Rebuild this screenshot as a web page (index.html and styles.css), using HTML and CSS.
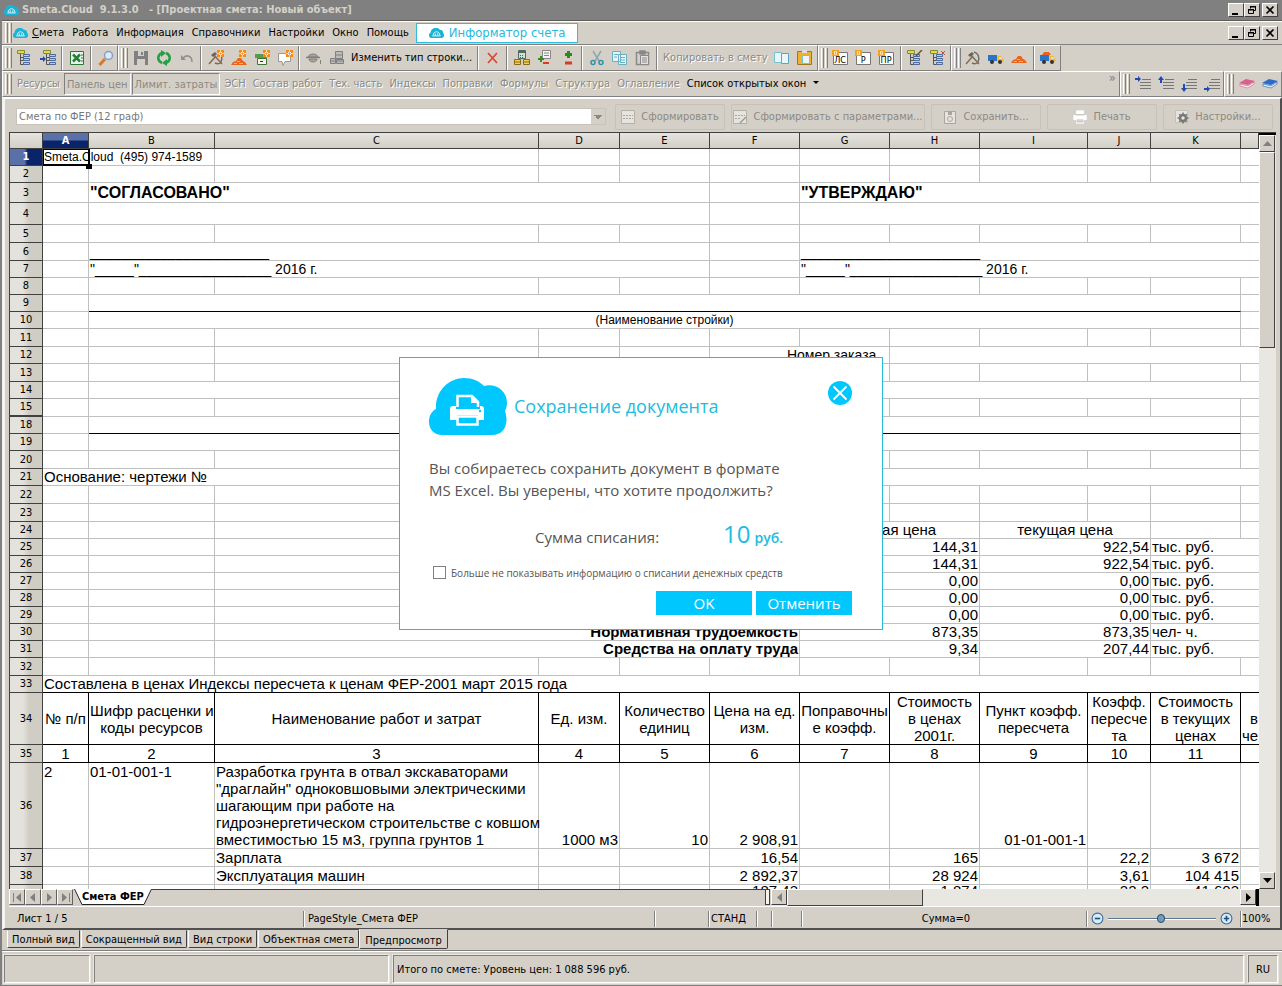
FILE: index.html
```html
<!DOCTYPE html>
<html lang="ru">
<head>
    <meta charset="UTF-8">
    <meta name="viewport" content="width=device-width, initial-scale=1.0">
    <title>Smeta.Cloud 9.1.3.0</title>
    <link rel="stylesheet" href="styles.css">
</head>
<body>
    <!-- shared icon parts -->
    <svg class="defs" aria-hidden="true">
        <symbol id="logo" viewBox="0 0 18 14">
            <path fill="#18b4d8" d="M3 13C1 13 0 11.500 0 10c0-2 1-3 2-3.500C2 3 5 1 8 1c2 0 4 .5 5 2 3 0 4 2 4 4 1 1 1 2 1 3 0 2-1 3-3 3z"/>
            <path fill="none" stroke="#fff" d="M4 10.500h10M5 10c0-6 8-6 8 0M7.500 10V7.500M10.500 10V7.500"/>
        </symbol>
        <symbol id="tree" viewBox="0 0 16 16">
            <path fill="#dcdc50" stroke="#8a8a28" d="M.5.500h7v3h-7z"/>
            <path fill="none" stroke="#555" d="M3.500 4v10.500H7M3.500 7.500H7M3.500 10.500H7"/>
            <path fill="#b4ccf0" stroke="#4c6a9c" d="M6.500 4.500h6v2h-6zM6.500 8.500h6v2h-6zM6.500 12.500h6v2h-6z"/>
        </symbol>
        <symbol id="new" viewBox="0 0 16 16">
            <path fill="#f58a1f" d="M9 0h7v7H9z"/>
            <path fill="#fff" d="M11 2h3v3h-3z"/>
            <path stroke="#ffd9a8" d="M12.500 0v7M9 3.500h7"/>
            <circle cx="12.500" cy="3.500" r="1" fill="#f58a1f"/>
        </symbol>
        <symbol id="newleft" viewBox="0 0 16 16">
            <path fill="#fff" stroke="#777" d="M1.500 2.500h14v12h-14z"/>
            <path fill="#f5a01f" d="M0 0h7v6H0z"/>
            <path fill="#fff" d="M2 1.500h3v3H2z"/>
            <circle cx="3.500" cy="3" r="1" fill="#f5a01f"/>
        </symbol>
        <symbol id="pile" viewBox="0 0 16 16">
            <path fill="#e8661c" d="M0 13l2-3 3-1 2-3h3l2 3 2 1 2 3z"/>
            <path stroke="#fbb070" d="M3 11.500h3M8 11.500h4M6 9.500h3"/>
        </symbol>
        <symbol id="truck" viewBox="0 0 16 16">
            <path fill="#2a74c8" d="M0 5h9v6H0z"/>
            <path fill="#f2b632" d="M9.500 6h3.500l2.500 3v3H9.500z"/>
            <path fill="#cfe6f8" d="M11 7h2l1.500 2H11z"/>
            <circle cx="4" cy="12" r="2" fill="#333"/><circle cx="12" cy="12" r="2" fill="#333"/>
        </symbol>
        <symbol id="lines" viewBox="0 0 16 16">
            <path stroke="#777" d="M7 3.500h9M5 6.500h11M5 9.500h11M5 12.500h11"/>
        </symbol>
        <symbol id="pick" viewBox="0 0 16 16">
            <path fill="none" stroke="#6d6d6d" stroke-width="1.500" d="M9 2c4 1 6 5 4 10-1 2-4 2-6 1"/>
            <path fill="none" stroke="#8a6a4d" stroke-width="1.500" d="M1 14l7-8M5 4l9 10"/>
            <path fill="#666" d="M3 5l4-3 2 2-4 3z"/>
        </symbol>
        <symbol id="books" viewBox="0 0 16 16">
            <path fill="currentColor" d="M0 7l7-4 9 2-7 4z"/>
            <path fill="#fff" stroke="currentColor" stroke-width=".7" d="M1 8l8 2 6-4v2l-6 4-8-2z"/>
        </symbol>
    </svg>

    <header class="titlebar">
        <svg class="logo"><use href="#logo"/></svg>
        <h1>Smeta.Cloud&nbsp; 9.1.3.0 &nbsp; - [Проектная смета: Новый объект]</h1>
        <div class="window-buttons">
            <button type="button" aria-label="Свернуть"><svg viewBox="0 0 12 11"><path d="M2 8h6v2H2z"/></svg></button>
            <button type="button" aria-label="Восстановить"><svg viewBox="0 0 12 11"><path fill="none" stroke="#000" d="M4.500 3.500V1.500h5v4h-2M2.500 4.500h5v4h-5z"/><path d="M4 1h6v1.500H4zM2 4h6v1.500H2z"/></svg></button>
            <button type="button" class="close" aria-label="Закрыть"><svg viewBox="0 0 12 11"><path stroke="#000" stroke-width="1.700" d="M2.500 1.500l7 7M9.500 1.500l-7 7"/></svg></button>
        </div>
    </header>

    <nav class="menubar">
        <span class="grip"></span>
        <svg class="logo"><use href="#logo"/></svg>
        <button type="button"><u>С</u>мета</button>
        <button type="button">Работа</button>
        <button type="button">Информация</button>
        <button type="button">Справочники</button>
        <button type="button">Настройки</button>
        <button type="button">Окно</button>
        <button type="button">Помощь</button>
        <button type="button" class="informer"><svg class="logo"><use href="#logo"/></svg>Информатор счета</button>
        <div class="window-buttons">
            <button type="button" aria-label="Свернуть"><svg viewBox="0 0 12 11"><path d="M2 8h6v2H2z"/></svg></button>
            <button type="button" aria-label="Восстановить"><svg viewBox="0 0 12 11"><path fill="none" stroke="#000" d="M4.500 3.500V1.500h5v4h-2M2.500 4.500h5v4h-5z"/><path d="M4 1h6v1.500H4zM2 4h6v1.500H2z"/></svg></button>
            <button type="button" class="close" aria-label="Закрыть"><svg viewBox="0 0 12 11"><path stroke="#000" stroke-width="1.700" d="M2.500 1.500l7 7M9.500 1.500l-7 7"/></svg></button>
        </div>
    </nav>

    <div class="toolbars">
        <div class="toolbar">
            <span class="grip"></span>
            <button type="button" class="tool" aria-label="Дерево"><svg><use href="#tree"/></svg></button>
            <button type="button" class="tool" aria-label="Вставить в дерево"><svg viewBox="0 0 16 16"><use href="#tree" x="3"/><path fill="#1f49b6" d="M0 8h3V6l3 3-3 3v-2H0z"/></svg></button>
            <span class="sep"></span>
            <button type="button" class="tool" aria-label="Excel"><svg viewBox="0 0 16 16"><path fill="#e9f3e9" stroke="#2b7a3a" d="M1.500 1.500h13v13h-13z"/><path stroke="#23813a" stroke-width="2.500" d="M4 4.500l7 7M11 4.500l-7 7"/><path stroke="#2b7a3a" d="M12 5h2M12 8h2M12 11h2"/></svg></button>
            <span class="sep"></span>
            <button type="button" class="tool" aria-label="Поиск"><svg viewBox="0 0 16 16"><circle cx="10.500" cy="5.500" r="4" fill="#d6ebfb" stroke="#8c9cc0" stroke-width="1.500"/><path stroke="#d9772b" stroke-width="3" d="M7 9l-5.500 6"/></svg></button>
        </div>
        <div class="toolbar">
            <span class="grip"></span>
            <button type="button" class="tool" aria-label="Сохранить"><svg viewBox="0 0 16 16"><path fill="#808080" d="M1 1h14v14H1z"/><path fill="#d4d0c8" d="M5 1h6v5H5zM4 9h8v6H4z"/><path fill="#808080" d="M8 2h2v3H8z"/></svg></button>
            <button type="button" class="tool" aria-label="Обновить"><svg viewBox="0 0 16 16"><path fill="none" stroke="#25a046" stroke-width="2.500" d="M6 13C1 11 1 5 6 3M10 3c5 2 5 8 0 10"/><path fill="#25a046" d="M5 0l5 3-5 4zM11 16l-5-3 5-4z"/></svg></button>
            <button type="button" class="tool" aria-label="Отменить"><svg viewBox="0 0 16 16"><path fill="none" stroke="#909090" stroke-width="1.500" d="M4 8c4-4 9-2 9 4"/><path fill="#909090" d="M2 5v5h5z"/></svg></button>
            <span class="sep"></span>
            <button type="button" class="tool" aria-label="Новая работа"><svg viewBox="0 0 16 16"><use href="#pick"/><use href="#new"/></svg></button>
            <button type="button" class="tool" aria-label="Новый материал"><svg viewBox="0 0 16 16"><use href="#pile" y="2"/><use href="#new" x="-1"/></svg></button>
            <button type="button" class="tool" aria-label="Новый раздел"><svg viewBox="0 0 16 16"><path fill="#5a9a50" d="M1 4h12v4H1z"/><path fill="#f4f4ea" stroke="#3f7438" d="M3.500 8.500h9v6h-9z"/><path stroke="#333" d="M6 11.500h3"/><use href="#new"/></svg></button>
            <button type="button" class="tool" aria-label="Новый комментарий"><svg viewBox="0 0 16 16"><path fill="#fff" stroke="#999" d="M1.500 3.500h12v8H8l-2 4-1-4H1.500z"/><use href="#new"/></svg></button>
            <span class="sep"></span>
            <button type="button" class="tool" aria-label="Каска"><svg viewBox="0 0 16 16"><path fill="#a8a59e" stroke="#808080" d="M2 7c1-4 9-4 10 0zM3 9h8c0 4-8 4-8 0z"/><path stroke="#808080" stroke-width="1.500" d="M0 7.500h14"/><path fill="#808080" d="M14 10h1v4h-1z"/></svg></button>
            <button type="button" class="tool" aria-label="Машины"><svg viewBox="0 0 16 16"><path fill="#bbb" stroke="#808080" d="M6.500 1.500h7v7h-7zM1.500 8.500h5v5h-5zM7.500 9.500h7v4h-7z"/><path stroke="#808080" d="M6 5h8M1 11h14"/></svg></button>
            <button type="button" class="tool-text row-type">Изменить тип строки...</button>
            <span class="sep"></span>
            <button type="button" class="tool" aria-label="Удалить"><svg viewBox="0 0 16 16"><path stroke="#e0442e" stroke-width="1.700" d="M3 3l9 10M12 3L3 13"/></svg></button>
            <span class="sep"></span>
            <button type="button" class="tool" aria-label="Расчёт"><svg viewBox="0 0 16 16"><path fill="#cfe0d8" stroke="#4f6a60" d="M4.500.5h7v8h-7z"/><path fill="#4f6a60" d="M5 1h6v2H5zM6 5h1v1H6zM8 5h1v1H8zM6 7h1v1H6zM8 7h1v1H8z"/><path fill="#f6cf4a" stroke="#8a6a1a" d="M.5 9.500h6v5h-6zM9.500 9.500h6v5h-6z"/><path stroke="#8a6a1a" d="M0 12h7M9 12h7"/></svg></button>
            <button type="button" class="tool" aria-label="Поправка"><svg viewBox="0 0 16 16"><path fill="#f4f4f4" stroke="#888" d="M5.500.5h8v8h-8z"/><path stroke="#888" d="M7 3h5M7 5.500h5"/><path stroke="#3a8a22" stroke-width="2" d="M1 9h6M4 6v6"/><path stroke="#d83a22" stroke-width="2" d="M6 13h6"/></svg></button>
            <button type="button" class="tool" aria-label="Плюс минус"><svg viewBox="0 0 16 16"><path stroke="#2f8a1c" stroke-width="3" d="M5 4.500h7M8.500 1v7"/><path stroke="#d83a22" stroke-width="3" d="M5 13h7"/></svg></button>
            <span class="sep"></span>
            <button type="button" class="tool" aria-label="Вырезать"><svg viewBox="0 0 16 16"><path stroke="#8aa8b0" stroke-width="1.500" d="M4 1l6 10M12 1L6 11"/><circle cx="4" cy="12.500" r="2" fill="none" stroke="#2f93a8" stroke-width="1.500"/><circle cx="12" cy="12.500" r="2" fill="none" stroke="#2f93a8" stroke-width="1.500"/></svg></button>
            <button type="button" class="tool" aria-label="Копировать"><svg viewBox="0 0 16 16"><path fill="#e4f4f8" stroke="#6ab0c4" d="M.5 1.500h8v10h-8zM6.500 4.500h8v10h-8z"/><path stroke="#6ab0c4" d="M2 4.500h4M2 7h3M8 7.500h5M8 10h5M8 12.500h5"/></svg></button>
            <button type="button" class="tool" aria-label="Вставить"><svg viewBox="0 0 16 16"><path fill="none" stroke="#888" stroke-width="1.500" d="M1.500 2.500h12v12h-12zM5 1h5v3H5z"/><path fill="#e4e2dc" stroke="#888" d="M5.500 5.500h8v9h-8z"/><path stroke="#888" d="M7 8h5M7 10h5M7 12h5"/></svg></button>
            <span class="sep"></span>
            <button type="button" class="tool-text copy-to" disabled>Копировать в смету</button>
            <button type="button" class="tool" aria-label="Копировать строки"><svg viewBox="0 0 16 16"><path fill="#eaf7fa" stroke="#7ac0d0" d="M.5 2.500h7v10h-7z"/><path fill="#eaf7fa" stroke="#5aa8bc" d="M7.500 3.500h7v10h-7z"/></svg></button>
            <button type="button" class="tool" aria-label="Вставить строки"><svg viewBox="0 0 16 16"><path fill="#f0b030" stroke="#a8761a" d="M.5 1.500h14v13H.5z"/><path fill="#ddd" d="M5 0h5v3H5z"/><path fill="#eaf7fa" stroke="#7ac0d0" d="M5.500 5.500h7v8h-7z"/></svg></button>
        </div>
        <div class="toolbar">
            <span class="grip"></span>
            <button type="button" class="tool badge"><svg><use href="#newleft"/></svg><span>ЛС</span></button>
            <button type="button" class="tool badge"><svg><use href="#newleft"/></svg><span>Р</span></button>
            <button type="button" class="tool badge"><svg><use href="#newleft"/></svg><span>ПР</span></button>
            <span class="sep"></span>
            <button type="button" class="tool" aria-label="Править дерево"><svg viewBox="0 0 16 16"><use href="#tree"/><path stroke="#6b5020" stroke-width="1.500" d="M9 6l6-6"/></svg></button>
            <button type="button" class="tool" aria-label="Удалить из дерева"><svg viewBox="0 0 16 16"><use href="#tree"/><path stroke="#e0442e" d="M11 1l4 4M15 1l-4 4"/></svg></button>
        </div>
        <div class="toolbar">
            <span class="grip"></span>
            <button type="button" class="tool" aria-label="Работы"><svg><use href="#pick"/></svg></button>
            <button type="button" class="tool" aria-label="Машины"><svg><use href="#truck"/></svg></button>
            <button type="button" class="tool" aria-label="Материалы"><svg><use href="#pile"/></svg></button>
            <span class="sep"></span>
            <button type="button" class="tool" aria-label="Перевозка"><svg viewBox="0 0 16 16"><path fill="#e8661c" d="M2 5l2-3h5l2 3z"/><use href="#truck"/></svg></button>
        </div>
    </div>

    <div class="toolbars">
        <div class="toolbar panels">
            <span class="grip"></span>
            <button type="button" disabled>Ресурсы</button>
            <button type="button" class="pressed" disabled>Панель цен</button>
            <button type="button" class="pressed" disabled>Лимит. затраты</button>
            <button type="button" disabled>ЭСН</button>
            <button type="button" disabled>Состав работ</button>
            <button type="button" disabled>Тех. часть</button>
            <button type="button" disabled>Индексы</button>
            <button type="button" disabled>Поправки</button>
            <button type="button" disabled>Формулы</button>
            <button type="button" disabled>Структура</button>
            <button type="button" disabled>Оглавление</button>
            <button type="button">Список открытых окон <i class="caret"></i></button>
            <span class="more">»</span>
        </div>
        <div class="toolbar">
            <span class="grip"></span>
            <button type="button" class="tool" aria-label="Вправо"><svg viewBox="0 0 16 16"><use href="#lines"/><path fill="#1f49b6" d="M0 2h3V0l3 3-3 3V4H0z"/></svg></button>
            <button type="button" class="tool" aria-label="Вверх"><svg viewBox="0 0 16 16"><use href="#lines"/><path fill="#1f49b6" d="M2 7V4H0l3-4 3 4H4v3z"/></svg></button>
            <button type="button" class="tool" aria-label="Вниз"><svg viewBox="0 0 16 16"><use href="#lines"/><path fill="#1f49b6" d="M2 8v4H0l3 4 3-4H4V8z"/></svg></button>
            <button type="button" class="tool" aria-label="Влево"><svg viewBox="0 0 16 16"><use href="#lines"/><path fill="#1f49b6" d="M0 12h3v-2l3 3-3 3v-2H0z"/></svg></button>
        </div>
        <div class="toolbar">
            <span class="grip"></span>
            <button type="button" class="tool pink" aria-label="Сборник"><svg><use href="#books"/></svg></button>
            <button type="button" class="tool blue" aria-label="Справочник"><svg><use href="#books"/></svg></button>
        </div>
    </div>

    <main class="child">
        <form class="report-bar">
            <select aria-label="Форма отчёта" disabled>
                <option>Смета по ФЕР (12 граф)</option>
            </select>
            <button type="button" disabled><svg viewBox="0 0 14 14"><path fill="#e6e4de" stroke="#b4b0a6" d="M.5.5h13v13H.5z"/><path stroke="#aaa69c" stroke-dasharray="2 1" d="M2 5.500h10M2 8.500h10"/></svg>Сформировать</button>
            <button type="button" class="wide" disabled><svg viewBox="0 0 14 14"><path fill="#e6e4de" stroke="#b4b0a6" d="M.5.5h13v13H.5z"/><path stroke="#aaa69c" stroke-dasharray="2 1" d="M2 5.500h10M2 8.500h6"/><path stroke="#999" stroke-width="1.500" d="M7 13l6-6"/></svg>Сформировать с параметрами...</button>
            <button type="button" disabled><svg viewBox="0 0 14 14"><path fill="#e6e4de" stroke="#aaa69c" d="M1.500 1.500h11v12h-11z"/><path fill="#aaa69c" d="M5 1h4v4H5z"/><circle cx="7" cy="9" r="2.500" fill="none" stroke="#aaa69c"/></svg>Сохранить...</button>
            <button type="button" disabled><svg viewBox="0 0 16 16"><path fill="#fff" stroke="#bbb" stroke-width=".6" d="M3 0h10v5h3v7h-3v4H3v-4H0V5h3z"/><path stroke="#aaa69c" d="M3 5.500h10M4 11.500h8M4 13.500h8"/></svg>Печать</button>
            <button type="button" disabled><svg viewBox="0 0 14 14"><path fill="#e6e4de" stroke="#c4c0b6" d="M.5.5h12v12H.5z"/><circle cx="8" cy="8" r="3" fill="none" stroke="#777" stroke-width="2.500"/><path stroke="#777" stroke-width="1.500" d="M8 2.500v2M8 11.500v2M2.500 8h2M11.500 8h2M4.200 4.200l1.300 1.300M10.500 10.500l1.300 1.300M4.200 11.800l1.300-1.300M10.500 5.500l1.300-1.300"/></svg>Настройки...</button>
        </form>

        <div class="sheet-frame">
            <div class="sheet">
                <table>
                    <colgroup>
                        <col class="w-head"><col class="w-a"><col class="w-b"><col class="w-c"><col class="w-d">
                        <col class="w-e"><col class="w-e"><col class="w-e"><col class="w-e">
                        <col class="w-i"><col class="w-j"><col class="w-e"><col>
                    </colgroup>
                    <thead>
                        <tr><th></th><th class="current">A</th><th>B</th><th>C</th><th>D</th><th>E</th><th>F</th><th>G</th><th>H</th><th>I</th><th>J</th><th>K</th><th></th></tr>
                    </thead>
                    <tbody>
                        <tr><th class="current">1</th><td class="small selected">Smeta.Cloud&nbsp; (495) 974-1589</td><td></td><td></td><td></td><td></td><td></td><td></td><td></td><td></td><td></td><td></td><td></td></tr>
                        <tr><th>2</th><td></td><td></td><td></td><td></td><td></td><td></td><td></td><td></td><td></td><td></td><td></td><td></td></tr>
                        <tr class="h20"><th>3</th><td></td><td class="approve" colspan="4">"СОГЛАСОВАНО"</td><td></td><td class="approve" colspan="6">"УТВЕРЖДАЮ"</td></tr>
                        <tr class="h22"><th>4</th><td></td><td colspan="4"></td><td></td><td colspan="6"></td></tr>
                        <tr class="h18"><th>5</th><td></td><td></td><td></td><td></td><td></td><td></td><td></td><td></td><td></td><td></td><td></td><td></td></tr>
                        <tr class="h18"><th>6</th><td></td><td class="sign" colspan="4">_______________________</td><td></td><td class="sign" colspan="6">_______________________</td></tr>
                        <tr><th>7</th><td></td><td class="sign" colspan="4">"_____"_________________ 2016 г.</td><td></td><td class="sign" colspan="6">"_____"_________________ 2016 г.</td></tr>
                        <tr><th>8</th><td></td><td></td><td></td><td></td><td></td><td></td><td></td><td></td><td></td><td></td><td></td><td></td></tr>
                        <tr><th>9</th><td></td><td class="rule" colspan="10"></td><td></td></tr>
                        <tr><th>10</th><td></td><td class="small center" colspan="10">(Наименование стройки)</td><td></td></tr>
                        <tr class="h18"><th>11</th><td></td><td></td><td></td><td></td><td></td><td></td><td></td><td></td><td></td><td></td><td></td><td></td></tr>
                        <tr><th>12</th><td></td><td></td><td></td><td></td><td></td><td class="sign right" colspan="2">Номер заказа &nbsp;&nbsp;</td><td colspan="5"></td></tr>
                        <tr class="h18"><th>13</th><td></td><td></td><td></td><td></td><td></td><td></td><td></td><td></td><td></td><td></td><td></td><td></td></tr>
                        <tr><th>14</th><td></td><td colspan="11"></td></tr>
                        <tr class="h18 hidden-below"><th>15</th><td></td><td></td><td></td><td></td><td></td><td></td><td></td><td></td><td></td><td></td><td></td><td></td></tr>
                        <tr><th>18</th><td></td><td class="rule" colspan="10"></td><td></td></tr>
                        <tr><th>19</th><td></td><td colspan="10"></td><td></td></tr>
                        <tr class="h18"><th>20</th><td></td><td></td><td></td><td></td><td></td><td></td><td></td><td></td><td></td><td></td><td></td><td></td></tr>
                        <tr><th>21</th><td colspan="12">Основание: чертежи №</td></tr>
                        <tr class="h18"><th>22</th><td></td><td></td><td></td><td></td><td></td><td></td><td></td><td></td><td></td><td></td><td></td><td></td></tr>
                        <tr class="h18"><th>23</th><td></td><td></td><td></td><td></td><td></td><td></td><td></td><td></td><td></td><td></td><td></td><td></td></tr>
                        <tr><th>24</th><td></td><td></td><td colspan="4"></td><td class="center" colspan="2">базовая цена</td><td class="center" colspan="2">текущая цена</td><td></td><td></td></tr>
                        <tr><th>25</th><td></td><td></td><td colspan="4"></td><td class="right" colspan="2">144,31</td><td class="right" colspan="2">922,54</td><td colspan="2">тыс. руб.</td></tr>
                        <tr><th>26</th><td></td><td></td><td colspan="4"></td><td class="right" colspan="2">144,31</td><td class="right" colspan="2">922,54</td><td colspan="2">тыс. руб.</td></tr>
                        <tr><th>27</th><td></td><td></td><td colspan="4"></td><td class="right" colspan="2">0,00</td><td class="right" colspan="2">0,00</td><td colspan="2">тыс. руб.</td></tr>
                        <tr><th>28</th><td></td><td></td><td colspan="4"></td><td class="right" colspan="2">0,00</td><td class="right" colspan="2">0,00</td><td colspan="2">тыс. руб.</td></tr>
                        <tr><th>29</th><td></td><td></td><td colspan="4"></td><td class="right" colspan="2">0,00</td><td class="right" colspan="2">0,00</td><td colspan="2">тыс. руб.</td></tr>
                        <tr><th>30</th><td></td><td></td><td class="right bold" colspan="4">Нормативная трудоемкость</td><td class="right" colspan="2">873,35</td><td class="right" colspan="2">873,35</td><td colspan="2">чел- ч.</td></tr>
                        <tr><th>31</th><td></td><td></td><td class="right bold" colspan="4">Средства на оплату труда</td><td class="right" colspan="2">9,34</td><td class="right" colspan="2">207,44</td><td colspan="2">тыс. руб.</td></tr>
                        <tr class="h18"><th>32</th><td></td><td></td><td></td><td></td><td></td><td></td><td></td><td></td><td></td><td></td><td></td><td></td></tr>
                        <tr><th>33</th><td class="rule" colspan="12">Составлена в ценах Индексы пересчета к ценам ФЕР-2001 март 2015 года</td></tr>
                        <tr class="h52 boxed"><th>34</th><td>№ п/п</td><td>Шифр расценки и<br>коды ресурсов</td><td>Наименование работ и затрат</td><td>Ед. изм.</td><td>Количество<br>единиц</td><td>Цена на ед.<br>изм.</td><td>Поправочны<br>е коэфф.</td><td>Стоимость<br>в ценах<br>2001г.</td><td>Пункт коэфф.<br>пересчета</td><td>Коэфф.<br>пересче<br>та</td><td>Стоимость<br>в текущих<br>ценах</td><td class="right"><br>в<br>че</td></tr>
                        <tr class="h18 boxed"><th>35</th><td>1</td><td>2</td><td>3</td><td>4</td><td>5</td><td>6</td><td>7</td><td>8</td><td>9</td><td>10</td><td>11</td><td></td></tr>
                        <tr class="h86"><th>36</th><td class="top">2</td><td class="top">01-01-001-1</td><td>Разработка грунта в отвал экскаваторами<br>"драглайн" одноковшовыми электрическими<br>шагающим при работе на<br>гидроэнергетическом строительстве с ковшом<br>вместимостью 15 м3, группа грунтов 1</td><td class="right">1000 м3</td><td class="right">10</td><td class="right">2 908,91</td><td></td><td></td><td class="right">01-01-001-1</td><td></td><td></td><td></td></tr>
                        <tr class="h18"><th>37</th><td></td><td></td><td>Зарплата</td><td></td><td></td><td class="right">16,54</td><td></td><td class="right">165</td><td></td><td class="right">22,2</td><td class="right">3 672</td><td></td></tr>
                        <tr class="h18"><th>38</th><td></td><td></td><td>Эксплуатация машин</td><td></td><td></td><td class="right">2 892,37</td><td></td><td class="right">28 924</td><td></td><td class="right">3,61</td><td class="right">104 415</td><td></td></tr>
                        <tr class="h18 last"><th></th><td></td><td></td><td></td><td></td><td></td><td class="right">187,43</td><td></td><td class="right">1 874</td><td></td><td class="right">22,2</td><td class="right">41 603</td><td></td></tr>
                    </tbody>
                </table>
            </div>
            <div class="vscroll">
                <button type="button" aria-label="Вверх"><svg viewBox="0 0 9 5"><path fill="#808080" d="M0 5l4.500-5L9 5z"/></svg></button>
                <div class="thumb"></div>
                <button type="button" class="end" aria-label="Вниз"><svg viewBox="0 0 9 5"><path d="M0 0l4.500 5L9 0z"/></svg></button>
            </div>
        </div>

        <div class="sheet-tabs">
            <button type="button" class="nav" aria-label="Первый лист"><svg viewBox="0 0 9 9"><path d="M0 0h1v9H0zM8 0v9L3 4.500z"/></svg></button>
            <button type="button" class="nav" aria-label="Предыдущий лист"><svg viewBox="0 0 9 9"><path d="M6 0v9L1 4.500z"/></svg></button>
            <button type="button" class="nav" aria-label="Следующий лист"><svg viewBox="0 0 9 9"><path d="M2 0v9l5-4.500z"/></svg></button>
            <button type="button" class="nav" aria-label="Последний лист"><svg viewBox="0 0 9 9"><path d="M8 0h1v9H8zM1 0v9l5-4.500z"/></svg></button>
            <button type="button" class="sheet-tab"><svg viewBox="0 0 8 16"><path fill="#fff" d="M0 0h8v15z"/><path fill="none" stroke="#222" d="M.5 0L8 15.500"/></svg><span>Смета ФЕР</span><svg viewBox="0 0 8 16"><path fill="#fff" d="M0 0h8L0 15z"/><path fill="none" stroke="#222" d="M7.500 0L0 15.500"/></svg></button>
            <span class="tabs-space"></span>
            <span class="splitter"></span>
            <div class="hscroll">
                <button type="button" aria-label="Влево"><svg viewBox="0 0 5 9"><path fill="#808080" d="M5 0v9L0 4.500z"/></svg></button>
                <div class="thumb"></div>
                <button type="button" class="end" aria-label="Вправо"><svg viewBox="0 0 5 9"><path d="M0 0v9l5-4.500z"/></svg></button>
            </div>
        </div>

        <div class="sheet-status">
            <span class="page-no">Лист 1 / 5</span>
            <span class="page-style">PageStyle_Смета ФЕР</span>
            <span class="gap-m"></span>
            <span class="mode">СТАНД</span>
            <span class="gap-s"></span>
            <span class="gap-l"></span>
            <span class="sum">Сумма=0</span>
            <span class="zoom">
                <svg viewBox="0 0 12 12"><circle cx="6" cy="6" r="5" fill="#d6ecfa" stroke="#3b6a94"/><path stroke="#234e78" stroke-width="1.500" d="M3.500 6h5"/></svg>
                <input type="range" min="0" max="200" value="97" aria-label="Масштаб">
                <svg viewBox="0 0 12 12"><circle cx="6" cy="6" r="5" fill="#d6ecfa" stroke="#3b6a94"/><path stroke="#234e78" stroke-width="1.500" d="M3.500 6h5M6 3.500v5"/></svg>
            </span>
            <span class="percent">100%</span>
        </div>
    </main>

    <div class="views">
        <button type="button">Полный вид</button>
        <button type="button">Сокращенный вид</button>
        <button type="button">Вид строки</button>
        <button type="button">Объектная смета</button>
        <button type="button" class="active">Предпросмотр</button>
    </div>

    <footer class="statusbar">
        <span class="cell-1"></span>
        <span class="cell-2"></span>
        <span class="cell-3">Итого по смете: Уровень цен: 1 088 596 руб.</span>
        <span class="lang">RU</span>
    </footer>

    <div class="overlay">
        <form class="dialog" role="dialog" aria-labelledby="dialog-title">
            <div class="dialog-head">
                <svg class="cloud" viewBox="0 0 78 57">
                    <path fill="#00c8ff" d="M13 57C5 57 0 51 0 44c0-7 3-11 7-13C6 13 20 0 35 0c9 0 15 3 20 8 12-3 23 5 23 17 0 3-1 6-2 8 4 12 0 24-13 24z"/>
                    <path fill="none" stroke="#fff" stroke-width="2.500" d="M28.500 29V18H43l6 6v5"/>
                    <path fill="#fff" d="M42 17v8h8zM21 31q0-3 3-3h3v4h24v-4h1q3 0 3 3v11h-6v-5H28v5h-7z"/>
                    <path fill="#fff" d="M22 31h32v6H22z"/>
                    <circle cx="51" cy="33" r="1.200" fill="#00c8ff"/>
                    <path fill="#00c8ff" stroke="#fff" stroke-width="2.500" d="M28.500 38.500h20v8h-20z"/>
                </svg>
                <h2 id="dialog-title">Сохранение документа</h2>
                <button type="button" class="dialog-close" aria-label="Закрыть"><svg viewBox="0 0 24 24"><circle cx="12" cy="12" r="12" fill="#00c8ff"/><path stroke="#fff" stroke-width="1.800" d="M5.500 5.500l13 13M18.500 5.500l-13 13"/></svg></button>
            </div>
            <p>Вы собираетесь сохранить документ в формате<br>MS Excel. Вы уверены, что хотите продолжить?</p>
            <div class="charge">
                <span>Сумма списания:</span>
                <span class="amount"><b>10</b> <small>руб.</small></span>
            </div>
            <div class="skip">
                <input type="checkbox" id="skip">
                <label for="skip">Больше не показывать информацию о списании денежных средств</label>
            </div>
            <div class="actions">
                <button type="button">OK</button>
                <button type="button">Отменить</button>
            </div>
        </form>
    </div>
</body>
</html>
```
FILE: styles.css
```css
* {
    box-sizing: border-box;
}
body {
    display: flex;
    flex-direction: column;
    height: 100vh;
    margin: 0;
    overflow: hidden;
    background: #d4d0c8;
    border-left: 2px solid #808080;
    color: #000;
    font: 11px/14px "DejaVu Sans Condensed", "Noto Sans", sans-serif;
}
button {
    padding: 0;
    border: 0;
    background: none;
    color: inherit;
    font: inherit;
    white-space: nowrap;
}
svg {
    display: block;
    flex: none;
}
.defs {
    position: absolute;
    width: 0;
    height: 0;
}
.logo {
    width: 15px;
    height: 12px;
}

/* title and menu */
.titlebar {
    display: flex;
    align-items: center;
    gap: 3px;
    flex: none;
    height: 21px;
    padding: 0 4px 0 2px;
    background: #808080;
    border-bottom: 1px solid #5c5c58;
}
.titlebar h1 {
    margin: 0;
    color: #d4d0c8;
    font-size: 11px;
    font-weight: bold;
}
.window-buttons {
    display: flex;
    margin-left: auto;
}
.window-buttons button {
    width: 16px;
    height: 14px;
    background: #d4d0c8;
    border: 1px solid;
    border-color: #fff #404040 #404040 #fff;
}
.window-buttons .close {
    margin-left: 2px;
}
.window-buttons svg {
    width: 12px;
    height: 11px;
    margin-left: 1px;
}
.menubar {
    display: flex;
    align-items: center;
    flex: none;
    height: 24px;
    padding-right: 4px;
    border-top: 1px solid #fff;
    border-bottom: 1px solid #808080;
}
.menubar > button {
    padding: 0 4px;
}
.menubar .informer {
    display: flex;
    align-items: center;
    gap: 5px;
    height: 20px;
    margin-left: 3px;
    padding: 0 12px;
    background: #fff;
    border: 1px solid #32bcdc;
    color: #28b8dc;
    font-size: 13px;
}
.grip {
    flex: none;
    align-self: center;
    width: 7px;
    height: 20px;
    margin: 0 1px 0 2px;
    background: linear-gradient(90deg, #fff 1px, #d4d0c8 1px 2px, #808080 2px 3px, #d4d0c8 3px 4px, #fff 4px 5px, #d4d0c8 5px 6px, #808080 6px);
}
.menubar .grip {
    margin: 0 1px 0 3px;
}

/* toolbars */
.toolbars {
    display: flex;
    flex: none;
    height: 26px;
}
.toolbar {
    display: flex;
    align-items: center;
    border: 1px solid;
    border-color: #fff #808080 #808080 #fff;
}
.tool {
    display: flex;
    align-items: center;
    justify-content: center;
    width: 23px;
    height: 22px;
}
.tool svg {
    width: 16px;
    height: 16px;
}
.sep {
    width: 2px;
    height: 24px;
    margin: 0 2px;
    border-left: 1px solid #808080;
    border-right: 1px solid #fff;
}
.tool-text {
    padding: 0 3px;
    text-align: left;
}
.row-type {
    min-width: 127px;
}
.copy-to {
    min-width: 110px;
}
.badge {
    display: grid;
}
.badge svg,
.badge span {
    grid-area: 1 / 1;
}
.badge span {
    padding-top: 4px;
    font-size: 9px;
}
button:disabled {
    color: #8c8982;
    text-shadow: 1px 1px 0 #fff;
}
.panels {
    flex: 1;
    gap: 1px;
}
.panels button {
    height: 22px;
    padding: 0 3px;
}
.panels .pressed {
    padding: 2px 2px 0;
    border: 1px solid;
    border-color: #808080 #fff #fff #808080;
    text-shadow: none;
}
.caret {
    display: inline-block;
    margin: 0 0 3px 4px;
    border: 3px solid transparent;
    border-top-color: #000;
    border-bottom: 0;
}
.more {
    align-self: flex-start;
    margin: 0 3px 0 auto;
    color: #808080;
    font-size: 13px;
    line-height: 11px;
}
.pink {
    color: #d8608c;
}
.blue {
    color: #2a6cc8;
}

/* preview window */
.child {
    display: flex;
    flex-direction: column;
    flex: 1;
    min-height: 0;
    border-top: 2px solid #fff;
    border-left: 3px solid #f4f3f0;
    border-right: 2px solid #505050;
    border-bottom: 2px solid #505050;
}
.report-bar {
    display: flex;
    align-items: center;
    gap: 6px;
    flex: none;
    height: 33px;
    padding: 2px 7px 0 11px;
}
.report-bar select {
    flex: 1;
    min-width: 0;
    height: 17px;
    margin: 0 3px 0 0;
    padding: 0 2px;
    appearance: none;
    border: 1px solid #c8c4bc;
    border-radius: 0;
    background:
        conic-gradient(from 315deg at 50% 100%, #8c8982 90deg, transparent 0) right 3px bottom 5px / 8px 4px no-repeat,
        linear-gradient(#d4d0c8, #d4d0c8) right / 14px 100% no-repeat,
        #fff;
    color: #777;
    opacity: 1;
    font: inherit;
}
.report-bar button {
    display: flex;
    align-items: center;
    justify-content: center;
    gap: 6px;
    min-width: 110px;
    height: 26px;
    border: 1px solid #c6c2b8;
    border-radius: 2px;
    text-shadow: none;
}
.report-bar .wide {
    min-width: 194px;
}
.report-bar svg {
    width: 14px;
    height: 14px;
}
.sheet-frame {
    display: flex;
    flex: 1;
    min-height: 0;
    margin: 0 4px;
    border-top: 1px solid #404040;
    border-left: 1px solid #404040;
}
.sheet {
    flex: 1;
    min-width: 0;
    overflow: hidden;
    background: #fff;
}
table {
    width: 100%;
    table-layout: fixed;
    border-collapse: separate;
    border-spacing: 0;
    font: 15px/16px "Liberation Sans", Arial, sans-serif;
}
.w-head { width: 33px; }
.w-a { width: 46px; }
.w-b { width: 126px; }
.w-c { width: 324px; }
.w-d { width: 81px; }
.w-e { width: 90px; }
.w-i { width: 108px; }
.w-j { width: 63px; }
tr {
    height: 17px;
}
thead tr {
    height: 16px;
}
.h18 { height: 18px; }
.h20 { height: 20px; }
.h22 { height: 22px; }
.h52 { height: 52px; }
.h86 { height: 86px; }
td {
    padding: 0 1px;
    border: solid #c0c0c0;
    border-width: 0 1px 1px 0;
    white-space: nowrap;
}
td:last-child {
    border-right: 0;
}
th {
    padding: 0;
    background: linear-gradient(90deg, #e4e2dc 40%, #d0cdc4 60%);
    border: solid #404040;
    border-width: 0 1px 1px 0;
    font: 11px/14px "DejaVu Sans Condensed", "Noto Sans", sans-serif;
}
thead th {
    background: linear-gradient(#e6e4de, #d2cfc6);
}
th.current {
    background: linear-gradient(90deg, #5a70a8 45%, #0a246a 55%);
    color: #fff;
    font-weight: bold;
}
thead th.current {
    background: linear-gradient(#5a70a8 45%, #0a246a 55%);
}
.hidden-below th {
    border-bottom-width: 2px;
}
.small {
    font-size: 12px;
}
.sign {
    font-size: 14px;
}
.center {
    text-align: center;
}
.right {
    text-align: right;
}
.bold {
    font-weight: bold;
}
.approve {
    font-size: 16px;
    font-weight: bold;
}
.rule {
    border-bottom-color: #000;
}
.boxed td {
    border-color: #000;
    text-align: center;
}
.boxed td.right {
    text-align: right;
}
.h52 td,
.h86 td {
    line-height: 17px;
}
.h86 td {
    vertical-align: bottom;
}
.h86 .top {
    vertical-align: top;
}
.last td {
    line-height: 12px;
    vertical-align: top;
}
.selected {
    position: relative;
}
.selected::before {
    content: "";
    position: absolute;
    inset: 0 -2px -1px 0;
    border: 2px solid #000;
    border-width: 1px 2px 2px 1px;
}
.selected::after {
    content: "";
    position: absolute;
    right: -4px;
    bottom: -4px;
    width: 6px;
    height: 5px;
    background: #000;
}

/* scroll bars */
.vscroll,
.hscroll {
    display: flex;
    background: #e8e7e2;
}
.vscroll {
    flex-direction: column;
    width: 17px;
    border-top: 2px solid #000;
}
.vscroll button,
.hscroll button {
    display: flex;
    align-items: center;
    justify-content: center;
    flex: none;
    width: 16px;
    height: 17px;
    background: #d4d0c8;
    border: 1px solid;
    border-color: #fff #404040 #404040 #fff;
}
.vscroll svg {
    width: 9px;
    height: 5px;
}
.hscroll svg {
    width: 5px;
    height: 9px;
}
.thumb {
    background: #d4d0c8;
    border: 1px solid;
    border-color: #fff #404040 #404040 #fff;
}
.vscroll .thumb {
    width: 16px;
    height: 26%;
}
.end {
    margin-top: auto;
}
.hscroll {
    flex: 0 0 488px;
    border-right: 3px solid #000;
    margin-right: 17px;
}
.hscroll button {
    height: 16px;
    margin: 0;
}
.hscroll .thumb {
    width: 28%;
}
.hscroll .end {
    margin-left: auto;
}

/* sheet tabs */
.sheet-tabs {
    display: flex;
    flex: none;
    height: 17px;
    margin: 0 4px;
}
.nav {
    display: flex;
    align-items: center;
    justify-content: center;
    width: 16px;
    height: 16px;
    border: 1px solid;
    border-color: #fff #606060 #606060 #fff;
}
.nav svg {
    width: 9px;
    height: 9px;
    fill: #808080;
}
.sheet-tab {
    display: flex;
    height: 16px;
    margin-left: 1px;
    font-weight: bold;
}
.sheet-tab svg {
    width: 8px;
    height: 16px;
}
.sheet-tab span {
    height: 16px;
    padding-top: 1px;
    background: #fff;
    border-bottom: 1px solid #222;
}
.tabs-space {
    flex: 1;
    border-top: 1px solid #404040;
}
.splitter {
    width: 5px;
    height: 16px;
    margin-right: 1px;
    border: 1px solid #404040;
    background: #f4f3f0;
}

/* sheet status line */
.sheet-status {
    display: flex;
    align-items: center;
    flex: none;
    height: 22px;
    margin: 0 0 0 4px;
    padding-top: 2px;
    border-top: 1px solid #fff;
}
.sheet-status > span {
    height: 16px;
    padding-left: 4px;
    border-left: 1px solid #808080;
    box-shadow: inset 1px 0 0 #fff;
    line-height: 16px;
}
.sheet-status .page-no {
    width: 294px;
    padding-left: 8px;
    border: 0;
    box-shadow: none;
}
.page-style { width: 351px; }
.gap-m { width: 54px; }
.sheet-status .mode { width: 48px; padding-left: 2px; }
.gap-s { width: 15px; }
.gap-l { width: 30px; }
.sum {
    flex: 1;
    text-align: center;
}
.zoom {
    display: flex;
    align-items: center;
    gap: 4px;
    width: 154px;
}
.zoom svg {
    width: 13px;
    height: 13px;
}
.zoom input {
    width: 108px;
    height: 14px;
    margin: 0;
    appearance: none;
    background: linear-gradient(#5c7890 1px, #fff 1px) center / 100% 2px no-repeat;
}
.zoom input::-webkit-slider-thumb {
    appearance: none;
    width: 8px;
    height: 9px;
    border: 1px solid #2b4a66;
    border-radius: 4px;
    background: #6f9cc0;
}
.sheet-status .percent {
    width: 40px;
    padding-left: 1px;
}

/* view tabs */
.views {
    display: flex;
    flex: none;
    height: 21px;
    padding-left: 4px;
    border-bottom: 1px solid #808080;
}
.views button {
    height: 18px;
    margin-left: 1px;
    padding: 1px 4px 0;
    border: 1px solid;
    border-color: transparent #404040 #404040 #fff;
    border-radius: 0 0 2px 2px;
}
.views .active {
    height: 20px;
    margin: -1px 0 0;
    padding: 4px 5px 0;
    background: #d4d0c8;
}

/* status bar */
.statusbar {
    display: flex;
    gap: 4px;
    flex: none;
    height: 35px;
    padding: 3px 4px 2px 2px;
    border-top: 1px solid #fff;
    border-bottom: 1px solid #808080;
}
.statusbar span {
    padding: 7px 3px;
    border: 1px solid;
    border-color: #808080 #fff #fff #808080;
    outline: 1px solid #e8e6e0;
}
.cell-1 { width: 86px; }
.cell-2 { width: 295px; }
.cell-3 { flex: 1; }
.statusbar .lang {
    width: 30px;
    padding: 7px 0;
    text-align: center;
}

/* confirmation dialog */
.overlay {
    position: fixed;
    inset: 0;
    display: flex;
    align-items: center;
    justify-content: center;
}
.dialog {
    width: 484px;
    padding: 20px 30px 14px 29px;
    background: #fff;
    border: 1px solid #28b8d8;
    color: #555;
    font: 15px/22px "Open Sans", "Noto Sans", sans-serif;
}
.dialog-head {
    display: flex;
    align-items: center;
    gap: 7px;
}
.cloud {
    width: 78px;
    height: 57px;
}
.dialog h2 {
    flex: 1;
    margin: 0;
    color: #20bce0;
    font-size: 18px;
    font-weight: normal;
}
.dialog-close {
    align-self: flex-start;
    width: 24px;
    height: 24px;
    margin-top: 3px;
}
.dialog p {
    margin: 22px 0 18px;
}
.charge {
    display: flex;
    align-items: baseline;
    justify-content: flex-end;
    gap: 64px;
    padding-right: 69px;
    line-height: 30px;
}
.amount {
    color: #20bce0;
}
.amount b {
    font-size: 24px;
    font-weight: normal;
}
.amount small {
    font-size: 14px;
    font-weight: 600;
}
.skip {
    display: flex;
    align-items: center;
    gap: 5px;
    margin: 12px 0 10px 4px;
    font-size: 10px;
    line-height: 16px;
}
.skip input {
    appearance: none;
    width: 13px;
    height: 13px;
    margin: 0;
    border: 1px solid #808080;
    background: #fff;
}
.actions {
    display: flex;
    justify-content: flex-end;
    gap: 4px;
}
.actions button {
    width: 96px;
    height: 24px;
    background: #00c8ff;
    color: #fff;
}
```
